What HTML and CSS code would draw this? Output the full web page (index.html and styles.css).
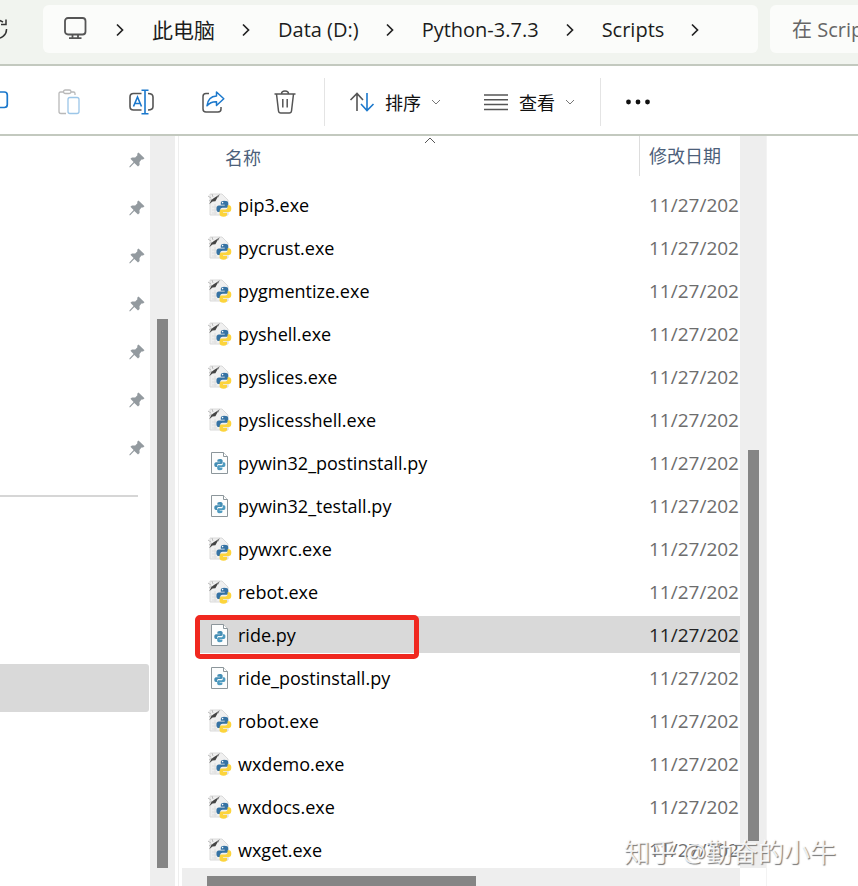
FILE: index.html
```html
<!DOCTYPE html>
<html lang="zh-CN">
<head>
    <meta charset="UTF-8">
    <meta name="viewport" content="width=device-width, initial-scale=1.0">
    <title>Scripts</title>
    <link rel="stylesheet" href="styles.css">
</head>
<body>
    <!-- shared icons -->
    <svg class="defs" width="0" height="0" aria-hidden="true">
        <symbol id="chevron" viewBox="0 0 8 14">
            <path d="M1 1.5 L6.5 7 L1 12.5" fill="none" stroke="#222" stroke-width="1.7"/>
        </symbol>
        <symbol id="down" viewBox="0 0 10 6">
            <path d="M1 1 L5 5 L9 1" fill="none" stroke="#777" stroke-width="1"/>
        </symbol>
        <symbol id="pin" viewBox="0 0 16 16">
            <path d="M9.5 0.5 L15.5 6.2 L14 7.6 L12.5 7.5 L10.5 10 L10.6 13 L9 14.5 L5.3 10.9 L1.2 15.2 L0.3 15.3 L0.6 14.3 L4.6 10.1 L1.4 6.8 L3 5.4 L6.2 5.4 L8.4 3.2 L8.2 1.8 Z" fill="#939a9f"/>
        </symbol>
        <symbol id="snake" viewBox="0 0 16 16">
            <path d="M7.8 0.5 C5 .5 4.5 1.6 4.5 2.8 V4.3 H8.2 V5 H2.8 C1 5 .4 6.5 .4 8.2 C.4 10 1.2 11.2 2.6 11.2 H4 V9.3 C4 8 5 7.2 6.2 7.2 H9.6 C10.8 7.2 11.5 6.4 11.5 5.4 V2.8 C11.5 1.2 10.2 .5 7.8 .5 Z"/>
        </symbol>
        <symbol id="exe" viewBox="0 0 24 24">
            <path d="M2 1 H14 L20 7 V22 H2 Z" fill="#f0f0f0" stroke="#dadada" stroke-width="1"/>
            <path d="M4 14 H9 M4 17 H9 M4 20 H9 M7 11 V22" stroke="#dedede" stroke-width="1"/>
            <path d="M0 3 L3 5 M1 8 L4 6 M4 1 L5 4" stroke="#bbb" stroke-width="1"/>
            <path d="M10.8 2 L7.4 8.2 L4.5 8.5 L1.2 11.3 L3.4 7 L5.6 5.2 Z" fill="#444"/>
            <path d="M12 .8 L9 3.4 L10.2 4.6 Z" fill="#777"/>
            <use href="#snake" x="8" y="7.2" width="17" height="17" fill="#3572a3"/>
            <g transform="rotate(180 16.3 15.7)"><use href="#snake" x="8.8" y="7.2" width="17" height="17" fill="#fcd43c"/></g>
            <circle cx="14.6" cy="9.6" r=".8" fill="#fff"/>
        </symbol>
        <symbol id="py" viewBox="0 0 24 24">
            <path d="M3.5 1.5 H15.5 L19.5 5.5 V22.5 H3.5 Z" fill="#fcfdfd" stroke="#8c969b" stroke-width="1"/>
            <path d="M15.5 1.5 V5.5 H19.5" fill="#fff" stroke="#8c969b" stroke-width="1"/>
            <use href="#snake" x="6" y="7.5" width="12" height="12" fill="#438db4"/>
            <g transform="rotate(180 11.9 13.6)"><use href="#snake" x="6" y="7.5" width="12" height="12" fill="#4f9bc0"/></g>
        </symbol>
    </svg>

    <header class="address">
        <button class="refresh" aria-label="刷新">
            <svg width="22" height="22" viewBox="0 0 22 22" fill="none" stroke="#333" stroke-width="1.5"><path d="M20.5 11 A9 9 0 1 1 17 4.2 M20 1.5 V6.5 H15"/></svg>
        </button>
        <nav class="crumbs">
            <svg class="monitor" width="24" height="24" viewBox="0 0 24 24" fill="none" stroke="#555" stroke-width="1.8"><rect x="2" y="1" width="20.5" height="16.5" rx="3"/><path d="M9.5 17.5 V21 M15 17.5 V21 M6 21.2 H18.5"/></svg>
            <svg class="chev" width="8" height="14"><use href="#chevron"/></svg>
            <a class="pc" href="#">此电脑</a>
            <svg class="chev" width="8" height="14"><use href="#chevron"/></svg>
            <a href="#">Data (D:)</a>
            <svg class="chev" width="8" height="14"><use href="#chevron"/></svg>
            <a href="#">Python-3.7.3</a>
            <svg class="chev" width="8" height="14"><use href="#chevron"/></svg>
            <a href="#">Scripts</a>
            <svg class="chev" width="8" height="14"><use href="#chevron"/></svg>
        </nav>
        <input class="search" type="text" placeholder="在 Scripts 中搜索" aria-label="搜索">
    </header>

    <div class="toolbar">
        <button class="tool" aria-label="复制">
            <svg width="24" height="26" viewBox="0 0 24 26" fill="none" stroke="#1b78cc" stroke-width="1.7"><rect x="6" y="3" width="16.3" height="15.5" rx="3"/></svg>
        </button>
        <button class="tool" aria-label="粘贴">
            <svg width="24" height="26" viewBox="0 0 24 26" fill="none" stroke-width="1.3"><path d="M6 3 H3.5 Q2 3 2 4.500 V22.500 Q2 24.500 4 24.500 H9 M14 3 H16.500 Q18 3 18 4.500 V6" stroke="#b9b9b9"/><rect x="6.500" y="1" width="7.500" height="3.500" rx="1.700" stroke="#b9b9b9"/><rect x="11" y="8.500" width="11" height="16" rx="2" stroke="#9cc6e8"/></svg>
        </button>
        <button class="tool" aria-label="重命名">
            <svg width="26" height="26" viewBox="0 0 26 26" fill="none" stroke-width="1.6"><path d="M13.500 4.500 H5.500 Q2 4.500 2 8 V17.500 Q2 21 5.500 21 H13.500 M20 4.500 Q25 4.500 25 8 V17.500 Q25 21 20 21" stroke="#555"/><path d="M5.500 17.500 L9.500 8 L13.500 17.500 M7 14.500 H12 M17 1.500 V24.500 M13.500 1.300 H20.500 M13.500 24.700 H20.500" stroke="#1b78cc"/></svg>
        </button>
        <button class="tool" aria-label="共享">
            <svg width="24" height="26" viewBox="0 0 24 26" fill="none" stroke-width="1.5"><path d="M8 4.500 H5 Q2 4.500 2 7.500 V20 Q2 23 5 23 H17 Q20 23 20 20 V18" stroke="#555"/><path d="M15.500 3 L22.800 9.800 L15.500 16.500 V12.700 Q9.500 12.500 6 16.800 Q7 7.500 15.500 7 Z" stroke="#1b78cc" stroke-linejoin="round"/></svg>
        </button>
        <button class="tool" aria-label="删除">
            <svg width="24" height="26" viewBox="0 0 24 26" fill="none" stroke="#555" stroke-width="1.5"><path d="M1.500 5 H22.500 M8.500 5 Q8.500 2 12 2 Q15.500 2 15.500 5 M3.500 5 L5.500 22 Q5.800 24 7.800 24 H16.200 Q18.200 24 18.500 22 L20.500 5 M9.800 10 V18.500 M14.200 10 V18.500"/></svg>
        </button>
        <span class="sep"></span>
        <button class="menu">
            <svg width="26" height="20" viewBox="0 0 26 20" fill="none" stroke-width="1.6"><path d="M8 19 V1.500 M1.500 8 L8 1.500 L14 8" stroke="#555"/><path d="M18 1 V18.500 M12 12 L18 18.500 L24.500 12" stroke="#1b78cc"/></svg>
            排序
            <svg class="down" width="10" height="6"><use href="#down"/></svg>
        </button>
        <button class="menu view">
            <svg width="26" height="18" viewBox="0 0 26 18" stroke="#555" stroke-width="1.500"><path d="M1 2 H25 M1 6.800 H25 M1 11.600 H25 M1 16.400 H25"/></svg>
            查看
            <svg class="down" width="10" height="6"><use href="#down"/></svg>
        </button>
        <span class="sep last"></span>
        <button class="more" aria-label="更多">
            <svg width="26" height="6" viewBox="0 0 26 6" fill="#111"><circle cx="3.500" cy="3" r="2.400"/><circle cx="13" cy="3" r="2.400"/><circle cx="22.500" cy="3" r="2.400"/></svg>
        </button>
    </div>

    <main class="content">
        <aside class="tree">
            <ul class="pins">
                <li><svg width="16" height="16"><use href="#pin"/></svg></li>
                <li><svg width="16" height="16"><use href="#pin"/></svg></li>
                <li><svg width="16" height="16"><use href="#pin"/></svg></li>
                <li><svg width="16" height="16"><use href="#pin"/></svg></li>
                <li><svg width="16" height="16"><use href="#pin"/></svg></li>
                <li><svg width="16" height="16"><use href="#pin"/></svg></li>
                <li><svg width="16" height="16"><use href="#pin"/></svg></li>
            </ul>
            <hr>
            <div class="current"></div>
        </aside>
        <div class="track tree-track"><div class="thumb"></div></div>

        <section class="files">
            <div class="list">
                <table>
                    <thead>
                        <tr>
                            <th class="name">名称<svg class="sorted" width="12" height="7" viewBox="0 0 12 7"><path d="M1 6 L6 1 L11 6" fill="none" stroke="#555"/></svg></th>
                            <th class="date"><div>修改日期</div></th>
                        </tr>
                    </thead>
                    <tbody>
                        <tr><td><svg class="icon"><use href="#exe"/></svg>pip3.exe</td><td>11/27/202</td></tr>
                        <tr><td><svg class="icon"><use href="#exe"/></svg>pycrust.exe</td><td>11/27/202</td></tr>
                        <tr><td><svg class="icon"><use href="#exe"/></svg>pygmentize.exe</td><td>11/27/202</td></tr>
                        <tr><td><svg class="icon"><use href="#exe"/></svg>pyshell.exe</td><td>11/27/202</td></tr>
                        <tr><td><svg class="icon"><use href="#exe"/></svg>pyslices.exe</td><td>11/27/202</td></tr>
                        <tr><td><svg class="icon"><use href="#exe"/></svg>pyslicesshell.exe</td><td>11/27/202</td></tr>
                        <tr><td><svg class="icon"><use href="#py"/></svg>pywin32_postinstall.py</td><td>11/27/202</td></tr>
                        <tr><td><svg class="icon"><use href="#py"/></svg>pywin32_testall.py</td><td>11/27/202</td></tr>
                        <tr><td><svg class="icon"><use href="#exe"/></svg>pywxrc.exe</td><td>11/27/202</td></tr>
                        <tr><td><svg class="icon"><use href="#exe"/></svg>rebot.exe</td><td>11/27/202</td></tr>
                        <tr class="selected"><td><svg class="icon"><use href="#py"/></svg>ride.py<span class="mark"></span></td><td>11/27/202</td></tr>
                        <tr><td><svg class="icon"><use href="#py"/></svg>ride_postinstall.py</td><td>11/27/202</td></tr>
                        <tr><td><svg class="icon"><use href="#exe"/></svg>robot.exe</td><td>11/27/202</td></tr>
                        <tr><td><svg class="icon"><use href="#exe"/></svg>wxdemo.exe</td><td>11/27/202</td></tr>
                        <tr><td><svg class="icon"><use href="#exe"/></svg>wxdocs.exe</td><td>11/27/202</td></tr>
                        <tr><td><svg class="icon"><use href="#exe"/></svg>wxget.exe</td><td>11/27/202</td></tr>
                    </tbody>
                </table>
            </div>
            <div class="track list-track"><div class="thumb"></div></div>
            <div class="htrack"><div class="thumb"></div></div>
        </section>
        <div class="preview"></div>
    </main>

    <div class="watermark">知乎 @勤奋的小牛</div>
</body>
</html>
```
FILE: styles.css
```css
* {
    box-sizing: border-box;
}
body {
    margin: 0;
    height: 100vh;
    display: flex;
    flex-direction: column;
    overflow: hidden;
    position: relative;
    background: #fff;
    color: #111;
    font-family: "Open Sans", "Noto Sans CJK SC", sans-serif;
    font-size: 18px;
}
.defs {
    position: absolute;
}
button {
    border: none;
    background: none;
    padding: 0;
    font: inherit;
    color: inherit;
    display: flex;
    align-items: center;
}
svg {
    flex-shrink: 0;
}

/* address bar */
.address {
    flex: none;
    height: 66px;
    display: flex;
    align-items: flex-start;
    padding-top: 5px;
    background: #f1f4ef;
    border-bottom: 2px solid #c3c9bf;
    font-size: 20px;
}
.refresh {
    width: 43px;
    height: 48px;
    flex: none;
    margin-left: -14px;
    margin-right: 14px;
}
.crumbs {
    flex: 1;
    height: 48px;
    display: flex;
    align-items: center;
    padding-left: 20px;
    background: #fbfcfa;
    border-radius: 6px;
}
.crumbs a {
    color: #1c1c1c;
    text-decoration: none;
    white-space: nowrap;
}
.crumbs .pc {
    font-size: 21px;
}
.chev {
    margin: 2px 28px 0 27px;
}
.monitor + .chev {
    margin-left: 29px;
}
.search {
    flex: none;
    width: 88px;
    height: 48px;
    margin-left: 12px;
    padding: 0 0 0 22px;
    border: none;
    border-radius: 6px 0 0 6px;
    background: #fbfcfa;
    font: inherit;
}
.search::placeholder {
    color: #666;
}

/* command bar */
.toolbar {
    flex: none;
    height: 70px;
    display: flex;
    align-items: center;
    padding-top: 4px;
    border-bottom: 2px solid #c3c9bf;
}
.tool {
    width: 72px;
    height: 48px;
    flex: none;
    justify-content: center;
}
.tool:first-child {
    margin-left: -39px;
}
.sep {
    width: 1px;
    height: 48px;
    margin: 0 24px 0 3px;
    background: #e4e4e4;
}
.menu {
    gap: 10px;
    height: 48px;
    white-space: nowrap;
}
.view {
    margin-left: 42px;
}
.sep.last {
    margin-left: 25px;
}

/* panes */
.content {
    flex: 1;
    min-height: 0;
    display: grid;
    grid-template-columns: 150px 25px 1fr 92px;
}
.tree {
    overflow: hidden;
}
.pins {
    list-style: none;
    margin: 0;
    padding: 0;
}
.pins li {
    height: 48px;
    display: flex;
    align-items: center;
    justify-content: flex-end;
    padding-right: 5px;
}
.tree hr {
    margin: 23px 12px 0 0;
    border: none;
    border-top: 2px solid #d6d6d6;
}
.current {
    height: 48px;
    margin: 167px 1px 0 0;
    background: #d9d9d9;
    border-radius: 0 3px 3px 0;
}
.track {
    display: flex;
    background: #eee;
}
.thumb {
    background: #858585;
}
.track .thumb {
    flex: 1;
}
.tree-track {
    padding: 183px 7px 18px;
}
.list-track {
    padding: 314px 7px 27px 8px;
}
.files {
    min-width: 0;
    min-height: 0;
    margin-left: 3px;
    padding-left: 3px;
    border-left: 1px solid #eee;
    display: grid;
    grid-template-columns: 1fr 26px;
    grid-template-rows: 1fr 18px;
}
.list {
    min-height: 0;
    overflow: hidden;
    padding-left: 18px;
}
.htrack {
    padding: 8px 0 0 25px;
    background: #eee;
}
.htrack .thumb {
    width: 269px;
    height: 10px;
}
.preview {
    border-left: 1px solid #f3f3f3;
}

/* file table */
table {
    width: 100%;
    table-layout: fixed;
    border-spacing: 0;
}
th {
    height: 47px;
    padding: 0 0 6px 25px;
    text-align: left;
    font-weight: normal;
    color: #4c607a;
}
.name {
    position: relative;
}
.sorted {
    position: absolute;
    top: 1px;
    left: 51%;
}
.date {
    width: 101px;
    padding: 0;
    vertical-align: top;
}
.date div {
    height: 40px;
    line-height: 41px;
    padding-left: 9px;
    border-left: 1px solid #ddd;
}
td {
    position: relative;
    height: 43px;
    padding: 0 0 0 8px;
    border: solid transparent;
    border-width: 3px 0;
    background-clip: padding-box;
    white-space: nowrap;
    overflow: hidden;
    line-height: 24px;
    color: #000;
}
td + td {
    padding-left: 10px;
    font-size: 19px;
    color: #6d6d6d;
}
.icon {
    width: 24px;
    height: 24px;
    margin-right: 6px;
    vertical-align: top;
}
.selected td {
    background-color: #d9d9d9;
    overflow: visible;
}
.selected td + td {
    color: #222;
}
.mark {
    position: absolute;
    left: -5px;
    top: -1px;
    width: 224px;
    height: 44px;
    border: 5px solid #f0281f;
    border-radius: 5px;
}

.watermark {
    position: absolute;
    right: 22px;
    bottom: 16px;
    font-size: 26px;
    line-height: 36px;
    color: rgba(255, 255, 255, 0.85);
    text-shadow: 1px 1px 1px #777;
}
```
